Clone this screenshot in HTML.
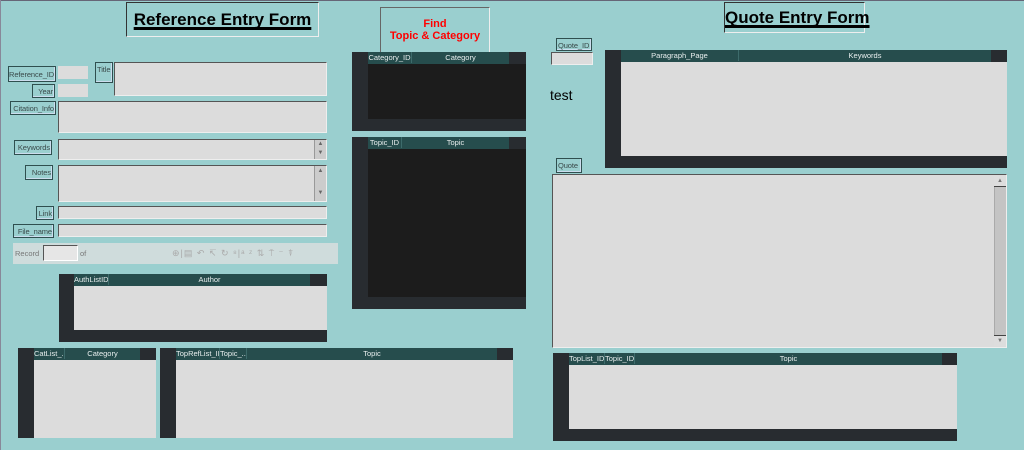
<!DOCTYPE html>
<html><head><meta charset="utf-8"><style>
*{margin:0;padding:0;box-sizing:border-box}
body{width:1024px;height:450px;background:#9acfcf;position:relative;overflow:hidden;font-family:"Liberation Sans",sans-serif}
div{position:absolute}
.lbl{border:1px solid #2f4f4f;box-shadow:inset -1px -1px 0 #cde;font-size:7.5px;color:#3a4a4a;text-align:right;padding:1px 1px 0 0;line-height:11px;white-space:nowrap;overflow:hidden;letter-spacing:-0.1px}
.inp{background:#dcdcdc;border-top:1px solid #555;border-left:1px solid #555;border-bottom:1px solid #eee;border-right:1px solid #eee}
.inp2{background:#dcdcdc}
.g{background:#282c30}
.gh{background:#264d4d;color:#e8eeee;font-size:7.5px;line-height:11px;white-space:nowrap;overflow:hidden}
.gh span{position:absolute;top:0;height:11px;border-right:1px solid #3d6b6b;text-align:center;overflow:hidden}
.gb{background:#dcdcdc}
.title{font-family:"Liberation Sans",sans-serif;font-weight:bold;text-decoration:underline;text-decoration-thickness:3px;text-decoration-skip-ink:none;color:#000;text-align:center;border:1px solid #333;border-right-color:#eee;border-bottom-color:#eee;white-space:nowrap}
</style></head><body>
<div style="left:0;top:0;width:1024px;height:1px;background:#667"></div>
<div style="left:0;top:0;width:1px;height:450px;background:#889"></div>
<div class="title" style="left:126px;top:2px;width:193px;height:35px;font-size:17px;line-height:33px">Reference Entry Form</div>
<div class="title" style="left:724px;top:2px;width:141px;height:31px;font-size:17px;line-height:29px">Quote Entry Form</div>
<div style="left:380px;top:7px;width:110px;height:46px;border:1px solid #666;border-right-color:#eee;border-bottom:none;color:#f00;font-family:'Liberation Sans',sans-serif;font-weight:bold;font-size:11px;text-align:center;line-height:12px;padding-top:10px">Find<br>Topic &amp; Category</div>

<div class="lbl" style="left:8px;top:66px;width:48px;height:16px;line-height:14px">Reference_ID</div>
<div class="inp2" style="left:58px;top:66px;width:30px;height:13px"></div>
<div class="lbl" style="left:32px;top:84px;width:23px;height:14px">Year</div>
<div class="inp2" style="left:58px;top:84px;width:30px;height:13px"></div>
<div class="lbl" style="left:95px;top:62px;width:18px;height:21px;text-align:left;padding-left:1px">Title</div>
<div class="inp" style="left:114px;top:62px;width:213px;height:34px"></div>
<div class="lbl" style="left:10px;top:101px;width:46px;height:14px">Citation_Info</div>
<div class="inp" style="left:58px;top:101px;width:269px;height:32px"></div>
<div class="lbl" style="left:14px;top:140px;width:38px;height:15px">Keywords</div>
<div class="inp" style="left:58px;top:139px;width:269px;height:21px"></div>
<div style="left:314px;top:140px;width:12px;height:19px;background:#ccc;border-left:1px solid #999;font-size:6px;color:#666;text-align:center;line-height:9px">▲<br>▼</div>
<div class="lbl" style="left:25px;top:165px;width:28px;height:15px">Notes</div>
<div class="inp" style="left:58px;top:165px;width:269px;height:37px"></div>
<div style="left:314px;top:166px;width:12px;height:35px;background:#ccc;border-left:1px solid #999;font-size:6px;color:#666;text-align:center;line-height:11px">▲<br>&nbsp;<br>▼</div>
<div class="lbl" style="left:36px;top:206px;width:18px;height:14px">Link</div>
<div class="inp" style="left:58px;top:206px;width:269px;height:13px"></div>
<div class="lbl" style="left:13px;top:224px;width:41px;height:14px">File_name</div>
<div class="inp" style="left:58px;top:224px;width:269px;height:13px"></div>
<div style="left:13px;top:243px;width:325px;height:21px;background:#cfdcdc;font-size:7.5px;color:#777;line-height:21px;padding-left:2px">Record</div>
<div style="left:43px;top:245px;width:35px;height:16px;background:#e6e6e6;border:1px solid #555;border-right-color:#fff;border-bottom-color:#fff"></div>
<div style="left:80px;top:243px;font-size:7.5px;color:#777;line-height:21px">of</div>
<div style="left:172px;top:243px;font-size:9px;color:#aaa;line-height:21px;letter-spacing:1px;white-space:nowrap">⊕|▤ ↶ ↸ ↻ ⁸|ᵃ ᶻ ⇅ ⍑ ⁻ ⍒</div>

<div class="g" style="left:59px;top:274px;width:268px;height:68px"></div>
<div class="gh" style="left:74px;top:274px;width:236px;height:12px"><span style="left:0;width:35px">AuthListID</span><span style="left:35px;width:201px;border:none">Author</span></div>
<div class="gb" style="left:74px;top:286px;width:253px;height:44px"></div>

<div class="g" style="left:18px;top:348px;width:138px;height:90px"></div>
<div class="gh" style="left:34px;top:348px;width:106px;height:12px"><span style="left:0;width:31px">CatList_...</span><span style="left:31px;width:75px;border:none">Category</span></div>
<div class="gb" style="left:34px;top:360px;width:122px;height:78px"></div>

<div class="g" style="left:160px;top:348px;width:353px;height:90px"></div>
<div class="gh" style="left:176px;top:348px;width:321px;height:12px"><span style="left:0;width:44px">TopRefList_ID</span><span style="left:44px;width:27px">Topic_...</span><span style="left:71px;width:250px;border:none">Topic</span></div>
<div class="gb" style="left:176px;top:360px;width:337px;height:78px"></div>

<div class="g" style="left:352px;top:52px;width:174px;height:79px"></div>
<div class="gh" style="left:368px;top:52px;width:141px;height:12px"><span style="left:0;width:44px">Category_ID</span><span style="left:44px;width:97px;border:none">Category</span></div>
<div style="left:368px;top:64px;width:158px;height:55px;background:#1c1c1c"></div>

<div class="g" style="left:352px;top:137px;width:174px;height:172px"></div>
<div class="gh" style="left:368px;top:137px;width:141px;height:12px"><span style="left:0;width:34px">Topic_ID</span><span style="left:34px;width:107px;border:none">Topic</span></div>
<div style="left:368px;top:149px;width:158px;height:148px;background:#1c1c1c"></div>

<div class="lbl" style="left:556px;top:38px;width:36px;height:13px;text-align:left;padding-left:1px">Quote_ID</div>
<div class="inp" style="left:551px;top:52px;width:42px;height:13px"></div>
<div style="left:550px;top:87px;font-family:'Liberation Sans',sans-serif;font-size:14px;color:#000">test</div>

<div class="g" style="left:605px;top:50px;width:402px;height:118px"></div>
<div class="gh" style="left:621px;top:50px;width:370px;height:12px"><span style="left:0;width:118px">Paragraph_Page</span><span style="left:118px;width:252px;border:none">Keywords</span></div>
<div class="gb" style="left:621px;top:62px;width:386px;height:94px"></div>

<div class="lbl" style="left:556px;top:158px;width:26px;height:15px;text-align:left;padding-left:1px">Quote</div>
<div class="inp" style="left:552px;top:174px;width:455px;height:174px"></div>
<div style="left:994px;top:176px;width:12px;height:170px;background:#c4c4c4;border-left:1px solid #aaa"></div>
<div style="left:994px;top:176px;width:12px;height:11px;background:#ddd;font-size:6px;color:#777;text-align:center;line-height:11px;border-bottom:1px solid #444">▲</div>
<div style="left:994px;top:335px;width:12px;height:11px;background:#ddd;font-size:6px;color:#777;text-align:center;line-height:11px;border-top:1px solid #444">▼</div>

<div class="g" style="left:553px;top:353px;width:404px;height:88px"></div>
<div class="gh" style="left:569px;top:353px;width:373px;height:12px"><span style="left:0;width:36px">TopList_ID</span><span style="left:36px;width:30px">Topic_ID</span><span style="left:66px;width:307px;border:none">Topic</span></div>
<div class="gb" style="left:569px;top:365px;width:388px;height:64px"></div>
</body></html>
